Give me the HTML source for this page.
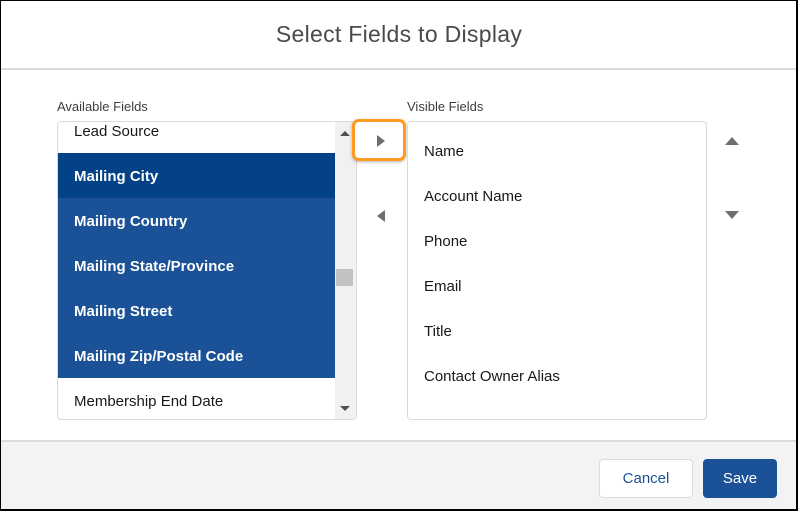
<!DOCTYPE html>
<html><head><meta charset="utf-8"><style>
*{box-sizing:border-box;margin:0;padding:0}
body{width:798px;height:511px;overflow:hidden;background:#fff;font-family:"Liberation Sans",sans-serif;position:relative}
.frame{position:absolute;left:0;top:0;width:798px;height:511px;border:1px solid #000;border-right-width:2px;border-bottom-width:2px;pointer-events:none;z-index:10}
.title{position:absolute;top:0;left:0;width:798px;height:70px;text-align:center;line-height:68px;font-size:23px;color:#4a4a48;letter-spacing:.3px;border-bottom:2px solid #dddbda}
.lbl{position:absolute;top:99px;font-size:13px;color:#3e3e3c}
.list{position:absolute;border:1px solid #dddbda;border-radius:4px;overflow:hidden;background:#fff}
.item{height:45px;line-height:47px;padding-left:16px;font-size:15px;color:#181818}
.sel{background:#1b5297;color:#fff;font-weight:bold}
.sel2{background:#034286;color:#fff;font-weight:bold}
.tri{position:absolute;width:0;height:0}
.footer{position:absolute;left:0;top:440px;width:798px;height:71px;background:#f3f3f3;border-top:2px solid #dddbda}
.btn{position:absolute;top:459px;height:39px;border-radius:4px;font-size:15px;line-height:37px;text-align:center}
</style></head><body>
<div class="title">Select Fields to Display</div>
<div class="lbl" style="left:57px">Available Fields</div>
<div class="lbl" style="left:407px">Visible Fields</div>
<div class="list" style="left:57px;top:121px;width:300px;height:299px">
 <div style="position:absolute;top:-14px;left:0;width:278px">
  <div class="item" style="height:45px">Lead Source</div>
  <div class="item sel2">Mailing City</div>
  <div class="item sel">Mailing Country</div>
  <div class="item sel">Mailing State/Province</div>
  <div class="item sel">Mailing Street</div>
  <div class="item sel">Mailing Zip/Postal Code</div>
  <div class="item">Membership End Date</div>
 </div>
 <div style="position:absolute;right:0;top:0;width:21px;height:100%;background:#f1f1f1"></div>
 <div style="position:absolute;right:3px;top:147px;width:17px;height:17px;background:#c1c1c1"></div>
 <div class="tri" style="right:6px;top:9px;border-left:5px solid transparent;border-right:5px solid transparent;border-bottom:5px solid #505050"></div>
 <div class="tri" style="right:6px;top:284px;border-left:5px solid transparent;border-right:5px solid transparent;border-top:5px solid #505050"></div>
</div>
<div style="position:absolute;left:352px;top:119px;width:54px;height:42px;border:3px solid #ff9a1e;border-radius:7px;background:#fff;box-shadow:0 1px 3px rgba(0,0,0,.3)"></div>
<div class="tri" style="left:377px;top:135px;border-top:6px solid transparent;border-bottom:6px solid transparent;border-left:8px solid #706e6b"></div>
<div class="tri" style="left:377px;top:210px;border-top:6px solid transparent;border-bottom:6px solid transparent;border-right:8px solid #706e6b"></div>
<div class="list" style="left:407px;top:121px;width:300px;height:299px;padding-top:6px">
  <div class="item">Name</div>
  <div class="item">Account Name</div>
  <div class="item">Phone</div>
  <div class="item">Email</div>
  <div class="item">Title</div>
  <div class="item">Contact Owner Alias</div>
</div>
<div class="tri" style="left:725px;top:137px;border-left:7px solid transparent;border-right:7px solid transparent;border-bottom:8px solid #706e6b"></div>
<div class="tri" style="left:725px;top:211px;border-left:7px solid transparent;border-right:7px solid transparent;border-top:8px solid #706e6b"></div>
<div class="footer"></div>
<div class="btn" style="left:599px;width:94px;background:#fff;border:1px solid #dddbda;color:#1b5297">Cancel</div>
<div class="btn" style="left:703px;width:74px;background:#1b5297;color:#fff;border:1px solid #1b5297">Save</div>
<div class="frame"></div>
</body></html>
